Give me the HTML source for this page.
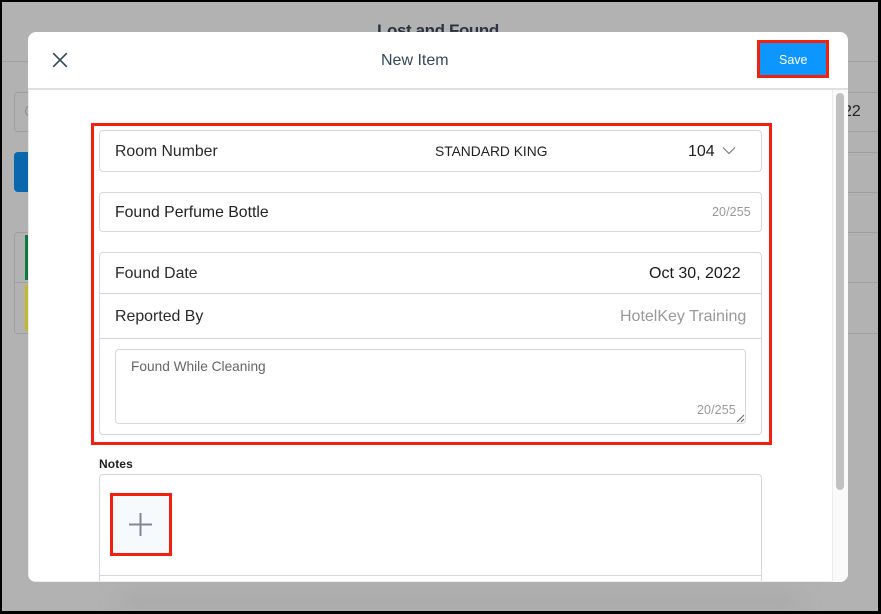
<!DOCTYPE html>
<html><head><meta charset="utf-8">
<style>
*{box-sizing:border-box}
html,body{margin:0;padding:0;width:881px;height:614px;overflow:hidden;background:#b2b2b2;font-family:"Liberation Sans",sans-serif}
.a{position:absolute}
.t{position:absolute;white-space:nowrap;line-height:20px;color:#222}
.c{position:absolute;border:1px solid #d5d7dc;border-radius:4px;background:#fff}
.l{position:absolute;background:#9d9fa3;height:1px}
.r{position:absolute;border:3px solid #f2200d;}
</style></head>
<body>
<div class="a" style="left:0;top:0;width:881px;height:614px;background:#b2b2b2"></div>
<div class="a" style="left:120px;top:592px;width:680px;height:19px;background:#a9a9a9;filter:blur(10px)"></div>
<!-- background page -->
<div class="t" style="left:377px;top:21px;font-size:17px;font-weight:bold;color:#2b3440;letter-spacing:-.4px">Lost and Found</div>
<div class="l" style="left:2px;top:61px;width:876px"></div>
<div class="a" style="left:14px;top:92px;width:30px;height:40px;border:1px solid #9d9fa3;border-radius:4px"></div>
<div class="a" style="left:25px;top:105px;width:12px;height:12px;border:1px solid #8a8a8a;border-radius:50%"></div>
<div class="l" style="left:848px;top:92px;width:30px"></div>
<div class="l" style="left:848px;top:131px;width:30px"></div>
<div class="l" style="left:848px;top:152px;width:30px"></div>
<div class="l" style="left:848px;top:192px;width:30px"></div>
<div class="l" style="left:848px;top:232px;width:30px"></div>
<div class="l" style="left:848px;top:282px;width:30px"></div>
<div class="l" style="left:848px;top:333px;width:30px"></div>
<div class="t" style="left:843px;top:102px;font-size:16px;color:#222">22</div>
<div class="a" style="left:14px;top:152px;width:30px;height:40px;background:#0a66ad;border-radius:4px"></div>
<div class="a" style="left:14px;top:232px;width:30px;height:102px;border:1px solid #9d9fa3;border-radius:4px"></div>
<div class="l" style="left:14px;top:282px;width:20px"></div>
<div class="a" style="left:25px;top:235px;width:5px;height:45px;background:#0b7a3e"></div>
<div class="a" style="left:25px;top:285px;width:5px;height:46px;background:#c2b92f"></div>

<!-- modal -->
<div class="a" style="left:28px;top:32px;width:820px;height:550px;background:#fff;border-radius:8px;overflow:hidden">
  <div class="a" style="left:0;top:56px;width:820px;height:2px;background:#e0e0e0"></div>
  <div class="a" style="left:0;top:58px;width:1px;height:492px;background:#ececec"></div>
  <div class="a" style="left:0;top:549px;width:820px;height:1px;background:#ececec"></div>
  <div class="a" style="left:804px;top:58px;width:16px;height:492px;background:#fafafa;border-left:1px solid #ececec"></div>
  <div class="a" style="left:808px;top:61px;width:8px;height:397px;background:#c1c1c1;border-radius:4px"></div>
</div>

<!-- header -->
<svg class="a" style="left:52px;top:52px" width="16" height="16" viewBox="0 0 16 16"><path d="M1.2 1.2L14.8 14.8M14.8 1.2L1.2 14.8" stroke="#34495e" stroke-width="1.7" fill="none"/></svg>
<div class="t" style="left:381px;top:51px;font-size:16px;color:#34485c;">New Item</div>
<div class="a" style="left:757px;top:40px;width:72px;height:38px;background:#0d96fd"></div>
<div class="t" style="left:779px;top:50px;font-size:12.5px;color:#fff">Save</div>

<!-- room -->
<div class="c" style="left:99px;top:130px;width:663px;height:42px"></div>
<div class="t" style="left:115px;top:142px;font-size:15.8px;color:#2a2a2a;">Room Number</div>
<div class="t" style="left:435px;top:142px;font-size:13.8px;color:#222;">STANDARD KING</div>
<div class="t" style="left:688px;top:142px;font-size:16px;color:#222">104</div>
<svg class="a" style="left:721px;top:146px" width="15" height="10" viewBox="0 0 15 10"><path d="M2 1.5L8 7.5L14 1.5" stroke="#777" stroke-width="1.1" fill="none"/></svg>

<!-- title -->
<div class="c" style="left:99px;top:192px;width:663px;height:40px"></div>
<div class="t" style="left:115px;top:203px;font-size:15.8px;color:#222;">Found Perfume Bottle</div>
<div class="t" style="left:712px;top:202px;font-size:12.5px;color:#999;letter-spacing:.1px">20/255</div>

<!-- group -->
<div class="c" style="left:99px;top:252px;width:663px;height:183px"></div>
<div class="a" style="left:100px;top:293px;width:661px;height:1px;background:#d5d7dc"></div>
<div class="a" style="left:100px;top:338px;width:661px;height:1px;background:#d5d7dc"></div>
<div class="t" style="left:115px;top:264px;font-size:15.8px;color:#2a2a2a;">Found Date</div>
<div class="t" style="left:649px;top:264px;font-size:16px;color:#1a1a1a;">Oct 30, 2022</div>
<div class="t" style="left:115px;top:307px;font-size:15.9px;color:#2a2a2a;">Reported By</div>
<div class="t" style="left:620px;top:307px;font-size:16px;color:#999;">HotelKey Training</div>
<div class="c" style="left:115px;top:349px;width:631px;height:75px"></div>
<div class="t" style="left:131px;top:357px;font-size:13.7px;color:#666;">Found While Cleaning</div>
<div class="t" style="left:697px;top:400px;font-size:12.5px;color:#999;letter-spacing:.1px">20/255</div>
<svg class="a" style="left:736px;top:414px" width="9" height="9" viewBox="0 0 9 9"><path d="M1 8L8 1M5 8L8 5" stroke="#666" stroke-width="1" fill="none"/></svg>

<!-- notes -->
<div class="t" style="left:99px;top:454px;font-size:12px;font-weight:bold;color:#222;letter-spacing:.1px">Notes</div>
<div class="a" style="left:99px;top:474px;width:663px;height:107px;border:1px solid #d5d7dc;border-bottom:0;border-radius:4px 4px 0 0;background:#fff"></div>
<div class="a" style="left:100px;top:575px;width:661px;height:1px;background:#d5d7dc"></div>
<div class="a" style="left:112px;top:495px;width:58px;height:59px;background:#f7fafd"></div>
<svg class="a" style="left:128px;top:512px" width="25" height="25" viewBox="0 0 25 25"><path d="M12.5 1V24M1 12.5H24" stroke="#7f8797" stroke-width="2" fill="none"/></svg>

<!-- annotations -->
<div class="r" style="left:91px;top:123px;width:681px;height:322px"></div>
<div class="r" style="left:757px;top:40px;width:72px;height:38px"></div>
<div class="r" style="left:110px;top:493px;width:62px;height:63px"></div>

<!-- screenshot frame -->
<div class="a" style="left:0;top:0;width:881px;height:2px;background:#000"></div>
<div class="a" style="left:0;top:0;width:2px;height:614px;background:#000"></div>
<div class="a" style="left:878px;top:0;width:3px;height:614px;background:#000"></div>
<div class="a" style="left:0;top:611px;width:881px;height:3px;background:#000"></div>
</body></html>
